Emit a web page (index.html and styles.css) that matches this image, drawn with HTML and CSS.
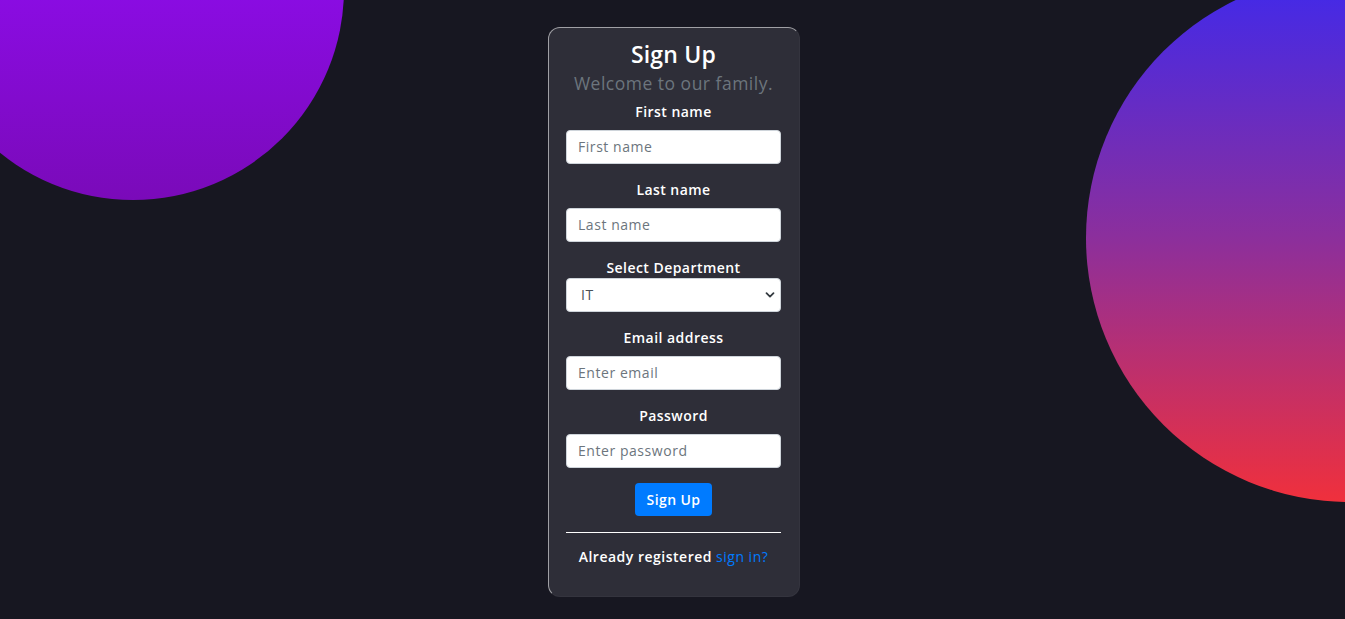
FILE: index.html
```html
<!DOCTYPE html>
<html lang="en">
<head>
<meta charset="utf-8">
<title>Sign Up</title>
<link rel="stylesheet" href="styles.css">
</head>
<body>
<svg class="backdrop" width="1345" height="619" viewBox="0 0 1345 619" preserveAspectRatio="xMinYMin slice" aria-hidden="true">
  <defs>
    <linearGradient id="gl" x1="0" y1="0" x2="0" y2="1">
      <stop offset="0" stop-color="#9a10ff"/>
      <stop offset="0.52" stop-color="#8a0ce2"/>
      <stop offset="1" stop-color="#7a0ab9"/>
    </linearGradient>
    <linearGradient id="gr" x1="0" y1="0" x2="0" y2="1">
      <stop offset="0" stop-color="#3f29ec"/>
      <stop offset="0.5" stop-color="#8c2f9c"/>
      <stop offset="1" stop-color="#f0303c"/>
    </linearGradient>
  </defs>
  <circle cx="133" cy="-11" r="211" fill="url(#gl)"/>
  <circle cx="1350" cy="238" r="264" fill="url(#gr)"/>
</svg>
<main class="page">
  <form class="card">
    <h1 class="title">Sign Up</h1>
    <p class="subtitle">Welcome to our family.</p>

    <div class="group">
      <label class="label">First name</label>
      <input class="field" type="text" placeholder="First name">
    </div>
    <div class="group">
      <label class="label">Last name</label>
      <input class="field" type="text" placeholder="Last name">
    </div>
    <div class="group">
      <label class="label label-tight">Select Department</label>
      <div class="select-wrap">
        <select class="field select">
          <option>IT</option>
        </select>
        <svg class="chevron" width="10" height="8" viewBox="0 0 10 8"><path d="M1.5 2.2 L5 5.6 L8.5 2.2" fill="none" stroke="#343a40" stroke-width="1.8" stroke-linecap="round" stroke-linejoin="round"/></svg>
      </div>
    </div>
    <div class="group">
      <label class="label">Email address</label>
      <input class="field" type="email" placeholder="Enter email">
    </div>
    <div class="group">
      <label class="label">Password</label>
      <input class="field" type="password" placeholder="Enter password">
    </div>

    <div class="actions">
      <button class="btn" type="button">Sign Up</button>
    </div>
    <hr class="divider">
    <p class="footer">Already registered <a class="link" href="#">sign in?</a></p>
  </form>
</main>
</body>
</html>
```

FILE: styles.css
```css
* { box-sizing: border-box; }

html, body {
  margin: 0;
  padding: 0;
  height: 100%;
}

body {
  background: #171721;
  font-family: "Open Sans", "Noto Sans", sans-serif;
  overflow: hidden;
  position: relative;
}

.backdrop {
  position: absolute;
  left: 0;
  top: 0;
  width: 100%;
  height: 100%;
  display: block;
}

.page {
  position: relative;
  display: flex;
  justify-content: center;
  padding-top: 27px;
  padding-left: 3px;
}

.card {
  width: 252px;
  background: #2e2e38;
  border-radius: 12px;
  border-top: 1px solid rgba(255, 255, 255, 0.55);
  border-left: 1px solid rgba(255, 255, 255, 0.55);
  border-right: 1px solid rgba(255, 255, 255, 0.03);
  border-bottom: 1px solid rgba(255, 255, 255, 0.03);
  padding: 11px 18px 29px 17px;
  display: flex;
  flex-direction: column;
  text-align: center;
}

.title {
  margin: 0;
  font-size: 23px;
  line-height: 30px;
  font-weight: 600;
  color: #ffffff;
  letter-spacing: 0.2px;
}

.subtitle {
  margin: 1px 0 5px;
  font-size: 17.5px;
  line-height: 26px;
  color: #6c757d;
  letter-spacing: 0.5px;
  white-space: nowrap;
}

.group {
  display: flex;
  flex-direction: column;
  margin-bottom: 15.5px;
}

.label {
  display: block;
  font-size: 14px;
  line-height: 21px;
  font-weight: 600;
  color: #ffffff;
  margin-bottom: 8px;
  letter-spacing: 0.45px;
}

.label-tight { margin-bottom: 0; }

.field {
  width: 100%;
  height: 33.5px;
  border: 1px solid #ced4da;
  border-radius: 4px;
  background: #ffffff;
  padding: 0 11px;
  font-family: inherit;
  font-size: 14px;
  color: #495057;
  outline: none;
  letter-spacing: 0.55px;
}

.field::placeholder { color: #6c757d; }

.select-wrap { position: relative; }

.select {
  appearance: none;
  -webkit-appearance: none;
  padding-left: 14px;
  color: #495057;
}

.chevron {
  position: absolute;
  right: 6px;
  top: 13px;
  pointer-events: none;
}

.actions {
  display: flex;
  justify-content: center;
  margin-top: -0.5px;
}

.btn {
  width: 77px;
  height: 33px;
  background: #007bff;
  border: none;
  border-radius: 4px;
  color: #ffffff;
  font-family: inherit;
  font-size: 14px;
  font-weight: 600;
  padding: 0;
  letter-spacing: 0.4px;
}

.divider {
  width: 100%;
  margin: 16px 0 0;
  border: none;
  border-top: 1px solid #ffffff;
  height: 0;
}

.footer {
  margin: 13.5px 0 0;
  font-size: 14px;
  line-height: 21px;
  font-weight: 600;
  color: #ffffff;
  letter-spacing: 0.5px;
  white-space: nowrap;
}

.link {
  color: #007bff;
  font-weight: 400;
  text-decoration: none;
}
```
